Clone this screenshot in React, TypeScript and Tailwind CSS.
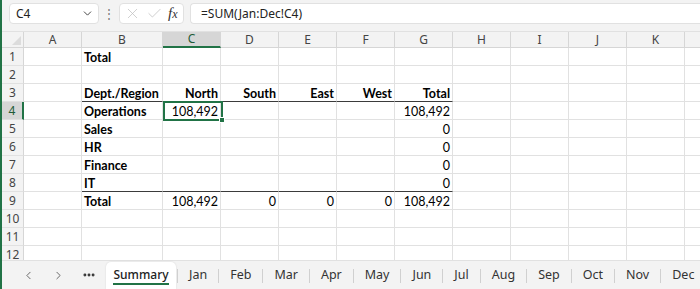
import { ChevronDown, ChevronLeft, ChevronRight, MoreHorizontal, X, Check } from 'lucide-react';

type Cell = { v: string; bold?: boolean; right?: boolean };

const COLS = ['A', 'B', 'C', 'D', 'E', 'F', 'G', 'H', 'I', 'J', 'K', 'L'];
const WIDTHS: Record<string, number> = { B: 81 };
const ROWS = [1, 2, 3, 4, 5, 6, 7, 8, 9, 10, 11, 12];

const DATA: Record<string, Cell> = {
  B1: { v: 'Total', bold: true },
  B3: { v: 'Dept./Region', bold: true },
  C3: { v: 'North', bold: true, right: true },
  D3: { v: 'South', bold: true, right: true },
  E3: { v: 'East', bold: true, right: true },
  F3: { v: 'West', bold: true, right: true },
  G3: { v: 'Total', bold: true, right: true },
  B4: { v: 'Operations', bold: true },
  C4: { v: '108,492', right: true },
  G4: { v: '108,492', right: true },
  B5: { v: 'Sales', bold: true },
  G5: { v: '0', right: true },
  B6: { v: 'HR', bold: true },
  G6: { v: '0', right: true },
  B7: { v: 'Finance', bold: true },
  G7: { v: '0', right: true },
  B8: { v: 'IT', bold: true },
  G8: { v: '0', right: true },
  B9: { v: 'Total', bold: true },
  C9: { v: '108,492', right: true },
  D9: { v: '0', right: true },
  E9: { v: '0', right: true },
  F9: { v: '0', right: true },
  G9: { v: '108,492', right: true },
};

const TABS = ['Jan', 'Feb', 'Mar', 'Apr', 'May', 'Jun', 'Jul', 'Aug', 'Sep', 'Oct', 'Nov', 'Dec'];

const ui = { fontFamily: '"Noto Sans", "Open Sans", sans-serif' };
const cellFont = { fontFamily: 'Lato, "Liberation Sans", sans-serif' };

function Fx() {
  return (
    <span className="text-[15px] italic text-[#333]" style={{ fontFamily: '"Liberation Serif", serif' }}>
      f<span className="text-[12px]">x</span>
    </span>
  );
}

export default function App() {
  // thick rule under the header row and above the totals row
  const ruled = (col: string, row: number) => (row === 3 || row === 8) && 'BCDEFG'.includes(col);

  return (
    <div className="w-[700px] h-[289px] overflow-hidden bg-[#f3f3f3] border-l-2 border-[#217346] flex flex-col" style={ui}>
      {/* formula bar */}
      <div className="h-[31px] shrink-0 flex items-start pt-[3px] pl-[7px]">
        <div className="w-[90px] h-[21px] bg-white border border-[#e1e1e1] rounded-[4px] flex items-center justify-between pl-[6px] pr-[4px] text-[12px] text-[#222]">
          <span>C4</span>
          <ChevronDown size={13} strokeWidth={1.8} className="text-[#444]" />
        </div>
        <div className="w-[20px] h-[21px] flex items-center justify-center text-[#777] text-[12px] leading-none">⋮</div>
        <div className="w-[65px] h-[21px] bg-white border border-[#e1e1e1] rounded-[4px] flex items-center pl-[4px] gap-[5px]">
          <X size={17} strokeWidth={1} className="text-[#bdbdbd]" />
          <Check size={17} strokeWidth={1} className="text-[#bdbdbd]" />
          <Fx />
        </div>
        <div className="ml-[6px] flex-1 h-[21px] bg-white border border-[#e1e1e1] rounded-l-[4px] border-r-0 flex items-center pl-[10px] text-[12px] text-[#222]">
          =SUM(Jan:Dec!C4)
        </div>
      </div>

      {/* grid */}
      <div className="relative h-[229px] shrink-0 overflow-hidden bg-white">
        <div className="flex h-[17px] bg-[#f3f3f3] border-t border-[#e1e1e1]">
          <div className="w-[22px] shrink-0 border-r border-b border-[#d6d6d6] relative">
            <div className="absolute right-[2px] bottom-[2px] w-0 h-0 border-l-[9px] border-l-transparent border-b-[9px] border-b-[#dcdcdc]" />
          </div>
          {COLS.map(c => (
            <div
              key={c}
              className={`shrink-0 flex items-center justify-center text-[12px] border-r border-[#d6d6d6] ${c === 'C' ? 'bg-[#d6d6d6] border-b-2 border-b-[#217346] text-[#1f5b38]' : 'border-b border-b-[#d6d6d6] text-[#444]'}`}
              style={{ width: WIDTHS[c] ?? 58 }}
            >
              {c}
            </div>
          ))}
        </div>
        {ROWS.map(r => (
          <div key={r} className="flex h-[18px]">
            <div
              className={`w-[22px] shrink-0 flex items-center justify-center pt-[1px] text-[12px] border-b border-[#e1e1e1] ${r === 4 ? 'bg-[#d6d6d6] border-r-2 border-r-[#217346] text-[#1f5b38]' : 'bg-[#f3f3f3] border-r border-r-[#d6d6d6] text-[#444]'}`}
            >
              {r}
            </div>
            {COLS.map(c => {
              const cell = DATA[c + r];
              return (
                <div
                  key={c}
                  className={`shrink-0 flex items-end px-[2px] text-[12.5px] leading-[15px] text-black border-r border-[#e1e1e1] ${ruled(c, r) ? 'border-b border-b-[#3b3b3b]' : 'border-b border-b-[#e1e1e1]'} ${cell?.right ? 'justify-end' : 'justify-start'} ${cell?.bold ? 'font-bold' : ''}`}
                  style={{ width: WIDTHS[c] ?? 58, ...cellFont }}
                >
                  {cell?.v}
                </div>
              );
            })}
          </div>
        ))}
        {/* active cell C4 */}
        <div className="absolute left-[161px] top-[70px] w-[60px] h-[20px] border-2 border-[#217346] pointer-events-none">
          <div className="absolute -right-[4px] -bottom-[4px] w-[6px] h-[6px] bg-[#217346] border border-white" />
        </div>
      </div>

      {/* sheet tabs */}
      <div className="flex-1 flex items-stretch text-[12.5px] text-[#333] border-t border-[#e1e1e1]">
        <div className="flex items-center pl-[20px] gap-[17px] w-[104px] shrink-0 text-[#555]">
          <ChevronLeft size={13} strokeWidth={1.6} />
          <ChevronRight size={13} strokeWidth={1.6} />
          <MoreHorizontal size={14} strokeWidth={3} className="text-[#333]" />
        </div>
        <div className="mt-[1px] w-[70px] shrink-0 bg-white rounded-t-[5px] shadow-[0_0_2px_rgba(0,0,0,0.12)] flex items-center justify-center pt-[1px] font-medium text-[12px] text-[#222]">
          <span className="leading-[16px] border-b-2 border-[#217346]">Summary</span>
        </div>
        <div className="flex items-center ml-[1px] pt-[1px]">
          {TABS.map(t => (
            <div key={t} className="px-[11px] h-[14px] flex items-center border-l border-[#d0d0d0]">
              {t}
            </div>
          ))}
        </div>
      </div>
    </div>
  );
}
